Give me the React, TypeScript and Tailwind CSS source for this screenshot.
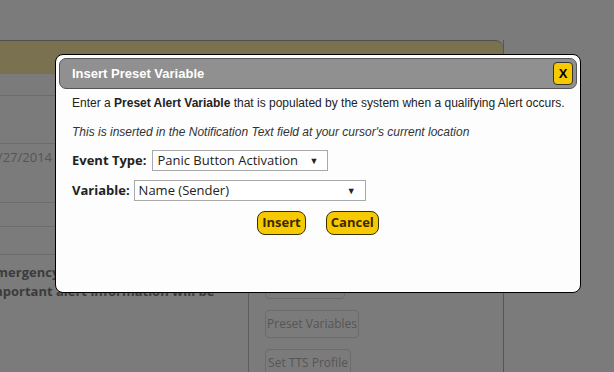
import React from 'react'

const sans = { fontFamily: '"Liberation Sans", Arial, sans-serif' }
const open = { fontFamily: '"Open Sans", "Noto Sans", sans-serif' }

function FakeSelect({ value, width }: { value: string; width: string }) {
  return (
    <div
      className={`flex h-[21px] items-center justify-between border border-[#a9a9a9] bg-white pl-[4px] pr-[9px] text-[13px] text-[#222] ${width}`}
      style={open}
    >
      <span>{value}</span>
      <span className="text-[9px] leading-none text-[#222]">▼</span>
    </div>
  )
}

function YellowButton({ label }: { label: string }) {
  return (
    <button
      className="h-[24px] rounded-[8px] border border-[#3b3000] bg-[#f7c900] px-[4px] text-[13px] font-bold text-[#3d2a00]"
      style={open}
    >
      {label}
    </button>
  )
}

export default function App() {
  return (
    <div className="relative h-[372px] w-[614px] overflow-hidden bg-[#7b7b7b]">
      {/* dimmed page behind the dialog */}
      <div className="pt-[40px]">
        <div className="w-[504px] border-r border-[#555]">
          <div className="h-[34px] rounded-tr-[8px] border-t border-[#505050] bg-[#7a7150]" />
          <div className="flex">
            <div className="w-[249px] border-r border-[#5e5e5e]">
              <div className="h-[22px] border-b border-[#6c6c6c]" />
              <div className="h-[48px] border-b border-[#6c6c6c]" />
              <div className="h-[59px] overflow-hidden border-b border-[#6c6c6c] pt-[4px] text-[13px] text-[#555]" style={open}>
                <span className="-ml-[17px] whitespace-nowrap">02/27/2014</span>
              </div>
              <div className="h-[24px] border-b border-[#6c6c6c]" />
              <div className="h-[28px] border-b border-[#6c6c6c]" />
              <div className="overflow-hidden pt-[8px] text-[13px] font-bold leading-[19px] text-[#3c3c3c]" style={open}>
                <div className="-ml-[12px] whitespace-nowrap">Emergency</div>
                <div className="-ml-[14px] whitespace-nowrap">important alert information will be</div>
              </div>
            </div>
            <div className="flex flex-col gap-[11px] pl-[16px] pt-[198px]">
              <div className="h-[27px] w-[80px] rounded-[4px] border border-[#6c6c6c]" />
              <div className="flex h-[28px] w-[94px] items-center justify-center rounded-[4px] border border-[#6c6c6c] text-[12px] text-[#555]" style={open}>
                Preset Variables
              </div>
              <div className="flex h-[28px] w-[86px] items-center justify-center rounded-[4px] border border-[#6c6c6c] text-[12px] text-[#555]" style={open}>
                Set TTS Profile
              </div>
            </div>
          </div>
        </div>
      </div>

      {/* dialog */}
      <div className="absolute left-[55px] top-[54px] h-[239px] w-[526px] rounded-[8px] border-[1.5px] border-black bg-[#fdfdfd] p-[3px]">
        <div className="flex h-[31px] items-center justify-between rounded-[7px] border border-[#555] bg-[#909090] pl-[12px] pr-[3px]">
          <span className="text-[13px] font-bold text-white" style={sans}>
            Insert Preset Variable
          </span>
          <button
            className="flex h-[23px] w-[20px] items-center justify-center rounded-[4px] border border-[#333] bg-[#f7c900] text-[13px] font-bold text-black"
            style={sans}
          >
            X
          </button>
        </div>
        <div className="px-[13px] pt-[7px]">
          <p className="whitespace-nowrap text-[12px] leading-[14px] text-[#222]" style={sans}>
            Enter a <b className="font-bold">Preset Alert Variable</b> that is populated by the system when a qualifying Alert occurs.
          </p>
          <p className="mt-[15px] whitespace-nowrap text-[12px] italic leading-[14px] text-[#333]" style={sans}>
            This is inserted in the Notification Text field at your cursor's current location
          </p>
          <div className="mt-[11px] flex items-center gap-[6px]">
            <span className="text-[13px] font-bold text-[#222]" style={open}>Event Type:</span>
            <FakeSelect value="Panic Button Activation" width="w-[176px]" />
          </div>
          <div className="mt-[9px] flex items-center gap-[4px]">
            <span className="text-[13px] font-bold text-[#222]" style={open}>Variable:</span>
            <FakeSelect value="Name (Sender)" width="w-[232px]" />
          </div>
          <div className="mt-[10px] flex justify-center gap-[20px]">
            <YellowButton label="Insert" />
            <YellowButton label="Cancel" />
          </div>
        </div>
      </div>
    </div>
  )
}
